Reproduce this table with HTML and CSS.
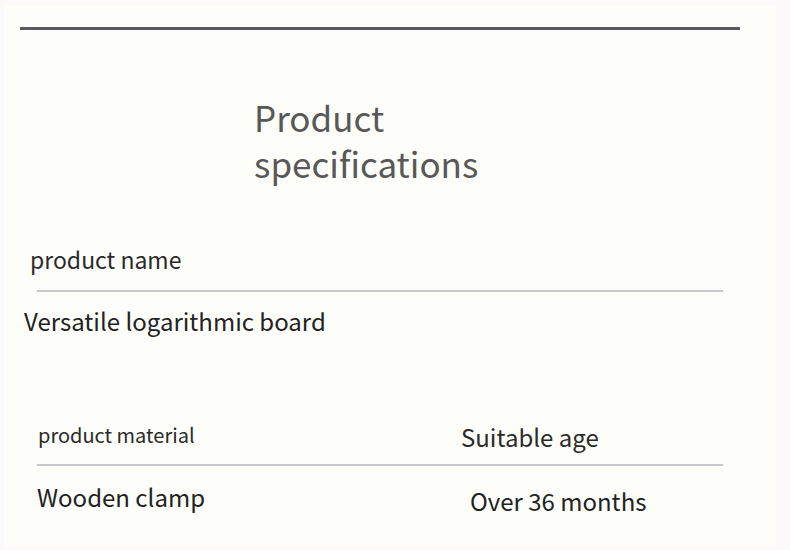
FILE: index.html
```html
<!DOCTYPE html>
<html lang="en">
<head>
<meta charset="utf-8">
<title>Product specifications</title>
<link rel="stylesheet" href="styles.css">
</head>
<body>
<div class="panel">
  <div class="top-rule"></div>
  <h1 class="title">Product<br>specifications</h1>
  <section class="spec spec-name">
    <div class="label">product name</div>
    <div class="rule"></div>
    <div class="value">Versatile logarithmic board</div>
  </section>
  <section class="spec spec-pair">
    <div class="pair-row labels">
      <div class="label small">product material</div>
      <div class="label age">Suitable age</div>
    </div>
    <div class="rule"></div>
    <div class="pair-row values">
      <div class="value narrow">Wooden clamp</div>
      <div class="value narrow months">Over 36 months</div>
    </div>
  </section>
</div>
</body>
</html>
```

FILE: styles.css
```css
html, body {
  margin: 0;
  padding: 0;
}
body {
  width: 790px;
  height: 550px;
  background: #fbf9f9;
  font-family: "Noto Sans CJK SC", "Noto Sans", sans-serif;
  overflow: hidden;
}
.panel {
  margin: 5px 14px 0 4px;
  height: 541px;
  background: #fdfdf9;
  padding-top: 22px;
  box-sizing: border-box;
  display: flex;
  flex-direction: column;
}
.top-rule {
  margin-left: 16px;
  width: 720px;
  height: 3px;
  background: #5b5760;
}
.title {
  margin: 64px 0 0 250px;
  font-weight: 400;
  font-size: 35px;
  line-height: 46px;
  color: #585858;
}
.label {
  font-size: 23px;
  color: #2a2a2a;
}
.rule {
  height: 2px;
  background: #c9c8cc;
  margin-left: 33px;
  width: 686px;
}
.value {
  font-size: 24px;
  color: #222222;
}
.spec-name {
  margin-top: 58px;
}
.spec-name .label {
  margin-left: 26px;
  line-height: 30px;
}
.spec-name .rule {
  margin-top: 16px;
}
.spec-name .value {
  margin-left: 20px;
  margin-top: 14px;
  line-height: 30px;
}
.spec-pair {
  margin-top: 86px;
}
.pair-row {
  display: flex;
}
.label.small {
  font-size: 20px;
  margin-left: 34px;
  width: 423px;
  position: relative;
  top: -2px;
}
.label.age {
  font-size: 24px;
}
.labels {
  align-items: center;
  line-height: 30px;
}
.spec-pair .rule {
  margin-top: 12px;
}
.values {
  margin-top: 16px;
  line-height: 30px;
}
.value.narrow {
  margin-left: 33px;
  width: 433px;
}
.value.months {
  margin-left: 0;
  width: auto;
  padding-top: 4px;
}
```
